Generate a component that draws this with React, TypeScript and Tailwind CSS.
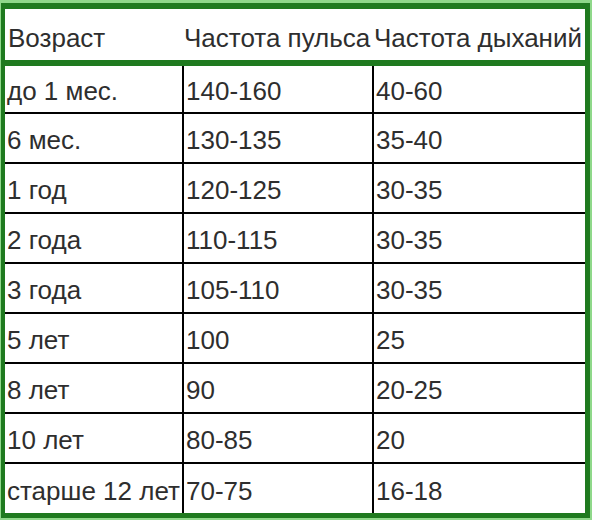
import React from "react";

const rows: [string, string, string][] = [
  ["до 1 мес.", "140-160", "40-60"],
  ["6 мес.", "130-135", "35-40"],
  ["1 год", "120-125", "30-35"],
  ["2 года", "110-115", "30-35"],
  ["3 года", "105-110", "30-35"],
  ["5 лет", "100", "25"],
  ["8 лет", "90", "20-25"],
  ["10 лет", "80-85", "20"],
  ["старше 12 лет", "70-75", "16-18"],
];

export default function App() {
  return (
    <div
      className="w-[592px] h-[520px] bg-[#8fd88a] pt-[3px] pl-[1px] pr-[2px] pb-[2px]"
      style={{ fontFamily: '"Liberation Sans", Arial, sans-serif' }}
    >
      <div className="h-full flex flex-col bg-white border-[#1f7a1f] border-l-4 border-t-[6px] border-r-[5px] border-b-[5px] text-[#2e2e2e] text-[26px] leading-none">
        <div className="h-[57px] flex items-center border-b-[6px] border-[#1f7a1f] pt-[6px]">
          <div className="w-[179px] pl-[3px] whitespace-nowrap">Возраст</div>
          <div className="w-[190px] pl-[0px] whitespace-nowrap">Частота пульса</div>
          <div className="flex-1 pl-[0px] whitespace-nowrap">Частота дыханий</div>
        </div>
        {rows.map((r, i) => (
          <div
            key={i}
            className={
              "flex " +
              (i === 0
                ? "h-[48px] border-b-2 border-black"
                : i === rows.length - 1
                ? "flex-1"
                : "h-[50px] border-b-2 border-black")
            }
          >
            <div className="w-[179px] border-r-2 border-black flex items-center pl-[2px] pt-[4px] whitespace-nowrap">
              {r[0]}
            </div>
            <div className="w-[190px] border-r-2 border-black flex items-center pl-[2px] pt-[4px] whitespace-nowrap">
              {r[1]}
            </div>
            <div className="flex-1 flex items-center pl-[2px] pt-[4px] whitespace-nowrap">
              {r[2]}
            </div>
          </div>
        ))}
      </div>
    </div>
  );
}
